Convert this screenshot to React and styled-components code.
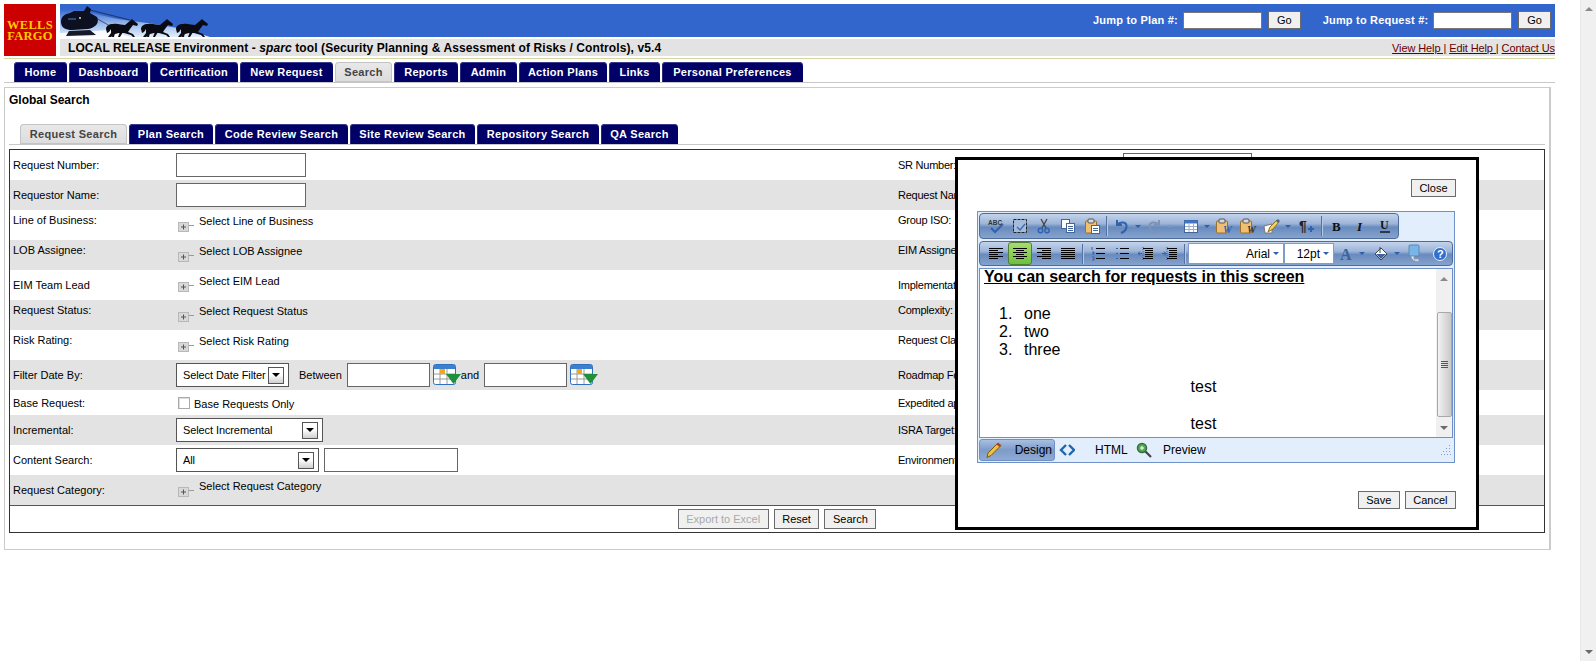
import React from 'react';
import styled, { createGlobalStyle } from 'styled-components';

const GlobalStyle = createGlobalStyle`
  html, body {
    margin: 0;
    height: 100%;
    overflow: hidden;
    background: #fff;
  }
  body, input {
    font-family: "Liberation Sans", Arial, sans-serif;
    font-size: 11px;
    color: #000;
  }
  * { box-sizing: border-box; }
`;

const Shell = styled.div`
  display: flex;
  height: 661px;
`;

const Page = styled.div`
  position: relative;
  width: 1580px;
  padding: 4px 25px 0 4px;
`;

const WindowBar = styled.div`
  width: 16px;
  height: 661px;
  padding: 7px 0;
  background: #f0f0f0;
  border-left: 1px solid #e8e8e8;
  display: flex;
  flex-direction: column;
  justify-content: space-between;
  align-items: center;
`;

const Arrow = styled.span`
  width: 0;
  height: 0;
  border-left: 4px solid transparent;
  border-right: 4px solid transparent;
  ${p => p.$up ? 'border-bottom: 4px solid #8a8a8a;' : 'border-top: 4px solid #6a6a6a;'}
`;

const Header = styled.header`
  display: flex;
  gap: 4px;
`;

const Logo = styled.div`
  width: 52px;
  height: 52px;
  background: #cc0000;
  color: #ffcc00;
  font: bold 12.5px/11px "Liberation Serif", "Times New Roman", serif;
  letter-spacing: 0.3px;
  text-align: center;
  display: flex;
  flex-direction: column;
  justify-content: center;
  padding-top: 2px;
`;

const Banner = styled.div`
  flex: 1;
  display: flex;
  flex-direction: column;
  gap: 2px;
`;

const BlueBar = styled.div`
  height: 33px;
  background: #3366cc;
  display: flex;
  justify-content: space-between;
  align-items: flex-start;
`;

const JumpForm = styled.form`
  display: flex;
  align-items: center;
  height: 18px;
  margin-top: 7px;
  padding-right: 4px;
`;

const JumpLabel = styled.label`
  color: #fff;
  font-weight: bold;
  letter-spacing: 0.2px;
  margin-left: ${p => p.$ml || 0}px;
  margin-right: 5px;
`;

const JumpInput = styled.input`
  width: 79px;
  height: 17px;
  border: 1px solid #777;
  background: #fff;
  margin-right: 6px;
`;

const Button = styled.button`
  height: 18px;
  padding: 0 7.5px;
  background: #f0f0f0;
  border: 1px solid #6b6b6b;
  font: 11px "Liberation Sans", Arial, sans-serif;
  color: ${p => p.disabled ? '#aaa' : '#000'};
`;

const GoButton = styled(Button)`
  padding: 0 8px;
`;

const GrayBar = styled.div`
  height: 17px;
  background: #e3e3e3;
  display: flex;
  justify-content: space-between;
  align-items: center;
  padding-left: 8px;
`;

const AppTitle = styled.div`
  font-size: 12px;
  font-weight: bold;
  letter-spacing: 0.1px;
`;

const HelpLinks = styled.div`
  color: #660000;
  font-size: 11px;
  letter-spacing: -0.1px;
  a { color: #660000; text-decoration: underline; }
`;

const Rule = styled.div`
  height: 1px;
  margin-top: 2px;
  background: #d6d6a4;
`;

const MainNav = styled.nav`
  display: flex;
  gap: 2px;
  height: 21px;
  margin-top: 3px;
  padding-left: 10px;
  border-bottom: 1px solid #c8c8c8;
`;

const Tab = styled.a`
  width: ${p => p.$w}px;
  height: 20px;
  display: flex;
  align-items: center;
  justify-content: center;
  font-weight: bold;
  letter-spacing: 0.3px;
  white-space: nowrap;
  border-radius: 4px 4px 0 0;
  color: ${p => p.$active ? '#444' : '#fff'};
  background: ${p => p.$active ? 'linear-gradient(#e9e9e9, #dcdcdc)' : '#000066'};
  box-shadow: ${p => p.$active
    ? 'inset 0 0 0 1px #c4c4c4'
    : 'inset 0 1px 0 #3b3b8c, inset 1px 0 0 #2a2a7c'};
`;

const Panel = styled.section`
  position: relative;
  height: 463px;
  margin-top: 4px;
  width: 1547px;
  border: 1px solid #cbcbcb;
  border-width: 1px 2px 1px 1px;
  padding: 0 4px;
`;

const PanelTitle = styled.h1`
  margin: 0;
  padding-top: 5px;
  height: 36px;
  font-size: 12px;
  line-height: 14px;
`;

const SubNav = styled(MainNav)`
  margin-top: 0;
  padding-left: 11px;
`;

const Table = styled.div`
  margin-top: 4px;
  width: 1536px;
  height: 384px;
  border: 1px solid #333;
`;

const FormRow = styled.div`
  display: grid;
  grid-template-columns: 166px 722px 225px 1fr;
  height: ${p => p.$h || 30}px;
  background: ${p => p.$shade ? '#e3e3e3' : '#fff'};
`;

const Label = styled.div`
  padding: ${p => p.$top}px 0 0 3px;
  line-height: 14px;
  white-space: nowrap;
`;

const SideLabel = styled(Label)`
  padding-left: 0;
  letter-spacing: -0.25px;
`;

const Cell = styled.div`
  display: flex;
  align-items: ${p => p.$top !== undefined ? 'flex-start' : 'center'};
  padding-top: ${p => p.$top || 0}px;
`;

const TextBox = styled.input`
  width: ${p => p.$w}px;
  height: 24px;
  border: 1px solid #666;
  background: #fff;
  margin-left: ${p => p.$ml || 0}px;
`;

const SelectBox = styled.div`
  width: ${p => p.$w}px;
  height: 24px;
  background: #fff;
  border: 1px solid #555;
  padding: 0 4px 0 6px;
  letter-spacing: -0.1px;
  display: flex;
  justify-content: space-between;
  align-items: center;
`;

const SelectButton = styled.span`
  width: 16px;
  height: 17px;
  border: 1px solid #555;
  background: linear-gradient(#fff 45%, #cfcfcf);
  display: flex;
  align-items: center;
  justify-content: center;
`;

const BlackArrow = styled.span`
  width: 0;
  height: 0;
  border-left: 4px solid transparent;
  border-right: 4px solid transparent;
  border-top: 4px solid #000;
`;

const Expander = styled.a`
  display: flex;
  gap: 4px;
  margin-left: 2px;
  line-height: 14px;
  white-space: nowrap;
`;

const Word = styled.span`
  margin: ${p => p.$mt || 0}px ${p => p.$mr || 0}px 0 ${p => p.$ml || 0}px;
`;

const CheckBox = styled.span`
  width: 12px;
  height: 12px;
  margin: 7px 4px 0 2px;
  background: #fff;
  border: 1px solid #aaa;
  box-shadow: inset 1px 1px 0 #ddd;
`;

const ActionRow = styled.div`
  height: 26px;
  display: flex;
  align-items: center;
  justify-content: center;
  gap: 5px;
  border-top: 1px solid #555;
`;

const TallButton = styled(Button)`
  height: 20px;
`;

const Dialog = styled.div`
  position: absolute;
  left: 955px;
  top: 157px;
  width: 524px;
  height: 373px;
  background: #fff;
  border: 3px solid #000;
  padding: 19px 20px 0 19px;
  display: flex;
  flex-direction: column;
`;

const DialogTop = styled.div`
  display: flex;
  justify-content: flex-end;
  gap: 5px;
  margin-top: ${p => p.$mt || 0}px;
`;

const Editor = styled.div`
  margin-top: 14px;
  width: 478px;
  height: 252px;
  background: #e3eefc;
  border: 1px solid #6f91c7;
  padding: 1px;
  display: flex;
  flex-direction: column;
`;

const Toolbar = styled.div`
  display: flex;
  align-items: center;
  width: ${p => p.$w}px;
  height: ${p => p.$h}px;
  margin-bottom: 2px;
  padding-left: 4px;
  border: 1px solid #4d6c9c;
  border-radius: 4px;
  background: linear-gradient(#c3d3ea 0%, #9db5d9 40%, #688abd 55%, #86a3cd 100%);
`;

const Tool = styled.span`
  width: 24px;
  height: 23px;
  flex: none;
  margin-left: ${p => p.$ml || 0}px;
  display: flex;
  align-items: center;
  justify-content: center;
  ${p => p.$on && `
    background: linear-gradient(#a9dc70, #6ec03c);
    border: 1px solid #4f7f34;
    border-radius: 3px;
  `}
`;

const Drop = styled.span`
  width: 8px;
  flex: none;
  display: flex;
  justify-content: center;
  &::after {
    content: '';
    border-left: 3px solid transparent;
    border-right: 3px solid transparent;
    border-top: 3px solid ${p => p.$dim ? '#7e97bd' : '#2f5fa8'};
  }
`;

const Sep = styled.span`
  width: 1px;
  height: 20px;
  flex: none;
  margin: 0 3px 0 2px;
  background: #54719f;
  box-shadow: 1px 0 0 #b5c7e2;
`;

const FontBox = styled.span`
  width: ${p => p.$w}px;
  height: 21px;
  flex: none;
  background: #fff;
  border: 1px solid #7f9dcb;
  padding-right: 3px;
  display: flex;
  align-items: center;
  justify-content: flex-end;
  font-size: 12px;
  gap: 2px;
`;

const EditArea = styled.div`
  height: 170px;
  width: 474px;
  background: #fff;
  border: 1px solid #6f91c7;
  display: flex;
  overflow: hidden;
`;

const EditText = styled.div`
  flex: 1;
  padding: 0 13px 0 4px;
  font-size: 16px;
  line-height: 18px;
`;

const EditHeading = styled.div`
  font-weight: bold;
  line-height: 16px;
  letter-spacing: -0.03px;
  text-decoration: underline;
`;

const EditList = styled.ol`
  margin: 20px 0 19px;
  padding-left: 15px;
  list-style: none;
  counter-reset: item;
  li {
    display: flex;
    counter-increment: item;
  }
  li::before {
    content: counter(item) ".";
    width: 25px;
  }
`;

const EditCenter = styled.div`
  text-align: center;
  margin-bottom: 19px;
`;

const EditScroll = styled.div`
  width: 16px;
  background: #f0f0f0;
  display: flex;
  flex-direction: column;
  align-items: center;
  padding: 8px 0 7px;
`;

const ScrollThumb = styled.div`
  width: 15px;
  height: 105px;
  margin: 31px 0 auto;
  border: 1px solid #a9a9a9;
  border-radius: 2px;
  background: linear-gradient(90deg, #f2f2f2, #c9c9c9);
  display: flex;
  align-items: center;
  justify-content: center;
`;

const Grip = styled.span`
  width: 7px;
  height: 7px;
  background: repeating-linear-gradient(#555 0 1px, transparent 1px 2px);
`;

const ModeBar = styled.div`
  flex: 1;
  display: flex;
  align-items: center;
  font-size: 12px;
  padding-right: 2px;
`;

const ModeItem = styled.span`
  display: flex;
  align-items: center;
  justify-content: space-between;
  height: 22px;
  margin-left: ${p => p.$ml || 0}px;
  width: ${p => p.$w}px;
  padding: ${p => p.$active ? '0 2px 0 6px' : '0'};
  ${p => p.$active && `
    background: linear-gradient(#a9bfe0, #7d9bc9 50%, #8fabd4);
    border: 1px solid #6f91c7;
    border-radius: 3px;
  `}
`;

const ResizeGrip = styled.svg`
  margin-left: auto;
`;

const Svg = ({ children, w = 16, h = 16 }) => (
  <svg width={w} height={h} viewBox={`0 0 ${w} ${h}`}>{children}</svg>
);

const StageArt = () => (
  <svg width="150" height="33" viewBox="0 0 150 33">
    <defs>
      <linearGradient id="sky" x1="0" y1="0" x2="0" y2="1">
        <stop offset="0" stopColor="#3366cc" />
        <stop offset="0.55" stopColor="#9dbdee" />
        <stop offset="1" stopColor="#e4eefb" />
      </linearGradient>
    </defs>
    <path d="M0 6 C20 2 38 12 58 15 C85 19 120 22 150 33 L0 33Z" fill="url(#sky)" />
    <path d="M0 29 L50 26 L70 33 L0 33Z" fill="#fff" opacity="0.85" />
    <path d="M1 18 C1 12 5 10 10 9 L14 7 L24 7 L27 2 L31 5 L30 9 L37 13 C40 19 35 24 28 25 L12 26 C6 26 1 24 1 18Z" fill="#0c1020" />
    <path d="M9 27 L30 26 L36 31 L6 32Z" fill="#161a28" />
    <path d="M30 6 L70 16 M36 14 L50 22" stroke="#0c1020" strokeWidth="0.6" fill="none" />
    <path d="M8 15 H16" stroke="#4f6fa8" strokeWidth="1.2" />
    <circle cx="20" cy="14" r="1" fill="#e8e0a0" />
    {[46, 81, 116].map(x => (
      <g key={x} transform={`translate(${x} 15)`}>
        <path
          d="M0 10 C0 7 3 5 7 5 C11 4 16 6 19 6 L25 1 L26 0 L27 1 L32 5 L31 7 L27 6 L24 10 L22 13 L27 15 L29 18 L27 18 L25 16 L18 14 L13 14 L9 15 L5 18 L2 18 L5 14 L5 10 L3 13 L1 14Z"
          fill="#0a0a12"
        />
        <path d="M17 13 L14 18 L12 18 L14 13Z M9 13 L8 18 L6 18 L7 13Z" fill="#0a0a12" />
      </g>
    ))}
  </svg>
);

const PlusIcon = () => (
  <svg width="17" height="11" viewBox="0 0 17 11" style={{ marginTop: 7 }}>
    <rect x="0.5" y="1.5" width="10" height="9" fill="#d8d8d8" stroke="#b8b8b8" />
    <path d="M3 6 H8 M5.5 3.5 V8.5" stroke="#555" />
    <path d="M11 4.5 H16" stroke="#999" />
  </svg>
);

const CalendarIcon = () => (
  <svg width="28" height="21" viewBox="0 0 28 21">
    <rect x="0.5" y="0.5" width="22" height="20" rx="2" fill="#fff" stroke="#2f6fc0" />
    <rect x="1" y="1" width="21" height="4" fill="#3b7fd0" />
    <path d="M7 5 V20 M14 5 V20 M1 10 H22 M1 15 H22" stroke="#9a9a9a" />
    <rect x="7" y="5" width="5" height="5" fill="#f2a818" />
    <path d="M13 10 H28 L20.5 20Z" fill="#1f8f3c" />
  </svg>
);

const Clip = () => (
  <g>
    <rect x="1.5" y="3" width="11" height="12" rx="1" fill="#f0c070" stroke="#9a7030" />
    <rect x="4" y="1" width="6" height="4" rx="1" fill="#d8d8d8" stroke="#555" />
  </g>
);

const icons = {
  spell: (
    <Svg>
      <text x="0" y="7" fontSize="6.5" fontWeight="bold" fontFamily="Liberation Sans" fill="#333">ABC</text>
      <path d="M3 10 L7 14 L15 6" fill="none" stroke="#2f62b0" strokeWidth="2" />
    </Svg>
  ),
  check: (
    <Svg>
      <rect x="1.5" y="1.5" width="13" height="13" fill="#a4bbdd" stroke="#222" strokeDasharray="3 1" />
      <path d="M5 9 L8 12 L13 6" fill="none" stroke="#3a69b4" strokeWidth="1.3" />
    </Svg>
  ),
  cut: (
    <Svg>
      <path d="M5 1 L10 10 M11 1 L6 10" stroke="#444" strokeWidth="1.3" />
      <circle cx="4.5" cy="12.5" r="2.2" fill="none" stroke="#2f62b0" strokeWidth="1.4" />
      <circle cx="11" cy="12.5" r="2.2" fill="none" stroke="#2f62b0" strokeWidth="1.4" />
    </Svg>
  ),
  copy: (
    <Svg>
      <rect x="1.5" y="1.5" width="8" height="9" fill="#fff" stroke="#44659a" />
      <rect x="6.5" y="5.5" width="8" height="9" fill="#fff" stroke="#44659a" />
      <path d="M8 8.5 H13 M8 10.5 H13 M8 12.5 H13" stroke="#44659a" />
    </Svg>
  ),
  paste: (
    <Svg>
      <Clip />
      <rect x="7.5" y="7.5" width="8" height="8" fill="#fff" stroke="#44659a" />
      <path d="M9 10.5 H14 M9 12.5 H14" stroke="#44659a" />
    </Svg>
  ),
  undo: (
    <Svg>
      <path d="M3 2 V7 H8" fill="none" stroke="#2f62b0" strokeWidth="2" />
      <path d="M3.5 6.5 C7 3 13 4 12.5 9 C12 12 10 14 7 15" fill="none" stroke="#2f62b0" strokeWidth="2" />
    </Svg>
  ),
  redo: (
    <Svg>
      <path d="M13 2 V7 H8" fill="none" stroke="#7e93b5" strokeWidth="2" />
      <path d="M12.5 6.5 C9 3 3 4 3.5 9 C4 12 6 14 9 15" fill="none" stroke="#7e93b5" strokeWidth="2" />
    </Svg>
  ),
  table: (
    <Svg>
      <rect x="1.5" y="2.5" width="13" height="12" fill="#fff" stroke="#44659a" />
      <rect x="1.5" y="2.5" width="13" height="3" fill="#3f76c4" />
      <path d="M6 6 V14 M10.5 6 V14 M2 8.5 H14 M2 11.5 H14" stroke="#9bb0cf" />
    </Svg>
  ),
  pasteWord: (
    <Svg w={18}>
      <Clip />
      <text x="8" y="15" fontSize="10" fontStyle="italic" fontWeight="bold" fontFamily="Liberation Serif" fill="#2f62b0">W</text>
    </Svg>
  ),
  pasteDark: (
    <Svg w={18}>
      <Clip />
      <text x="8" y="15" fontSize="10" fontStyle="italic" fontWeight="bold" fontFamily="Liberation Serif" fill="#333">W</text>
    </Svg>
  ),
  brush: (
    <Svg w={18}>
      <path d="M1 8 L9 6 V15 H2Z" fill="#fff" stroke="#777" />
      <path d="M7 9 L14 2 L16 4 L10 11 L5 14Z" fill="#f3d060" stroke="#8a6f20" />
      <path d="M13 3 L15 1 L17 3 L15 5Z" fill="#44659a" />
    </Svg>
  ),
  para: (
    <Svg>
      <text x="0" y="13" fontSize="14" fontWeight="bold" fontFamily="Liberation Sans" fill="#222">¶</text>
      <path d="M9 11 H15 M12 8 V14" stroke="#2f62b0" strokeWidth="2" />
    </Svg>
  ),
  bold: <Svg><text x="3" y="13" fontSize="13" fontWeight="bold" fontFamily="Liberation Serif" fill="#111">B</text></Svg>,
  italic: <Svg><text x="4" y="13" fontSize="13" fontStyle="italic" fontWeight="bold" fontFamily="Liberation Serif" fill="#111">I</text></Svg>,
  underline: (
    <Svg>
      <text x="3" y="11" fontSize="12" fontWeight="bold" fontFamily="Liberation Serif" fill="#111">U</text>
      <path d="M3 14 H13" stroke="#111" strokeWidth="1.4" />
    </Svg>
  ),
  left: <Svg><path d="M1 2.5 H15 M1 4.5 H10 M1 6.5 H15 M1 8.5 H10 M1 10.5 H15 M1 12.5 H10" stroke="#000" /></Svg>,
  center: <Svg><path d="M1 2.5 H15 M4 4.5 H12 M1 6.5 H15 M4 8.5 H12 M1 10.5 H15 M4 12.5 H12" stroke="#000" /></Svg>,
  right: <Svg><path d="M1 2.5 H15 M6 4.5 H15 M1 6.5 H15 M6 8.5 H15 M1 10.5 H15 M6 12.5 H15" stroke="#000" /></Svg>,
  justify: <Svg><path d="M1 2.5 H15 M1 4.5 H15 M1 6.5 H15 M1 8.5 H15 M1 10.5 H15 M1 12.5 H15" stroke="#000" /></Svg>,
  ol: (
    <Svg>
      <path d="M2 1 V4 M2 6 H4 V8 H2 M2 11 H4 V14 H2" stroke="#2f62b0" fill="none" />
      <path d="M6 2.5 H15 M6 7.5 H15 M6 12.5 H15" stroke="#000" />
    </Svg>
  ),
  ul: (
    <Svg>
      <path d="M2 2.5 H4 M2 7.5 H4 M2 12.5 H4" stroke="#2f62b0" />
      <path d="M6 2.5 H15 M6 7.5 H15 M6 12.5 H15" stroke="#000" />
    </Svg>
  ),
  outdent: (
    <Svg>
      <path d="M5 2.5 H15 M7 4.5 H15 M7 6.5 H15 M7 8.5 H15 M7 10.5 H15 M5 12.5 H15" stroke="#000" />
      <path d="M5 1 V15" stroke="#2f62b0" strokeDasharray="1 1" />
      <path d="M0 7.5 H4 M2 5.5 L0 7.5 L2 9.5" stroke="#2f62b0" fill="none" />
    </Svg>
  ),
  indent: (
    <Svg>
      <path d="M5 2.5 H15 M7 4.5 H15 M7 6.5 H15 M7 8.5 H15 M7 10.5 H15 M5 12.5 H15" stroke="#000" />
      <path d="M5 1 V15" stroke="#2f62b0" strokeDasharray="1 1" />
      <path d="M0 7.5 H4 M2 5.5 L4 7.5 L2 9.5" stroke="#2f62b0" fill="none" />
    </Svg>
  ),
  color: <Svg><text x="2" y="14" fontSize="16" fontWeight="bold" fontFamily="Liberation Serif" fill="#3a639f">A</text></Svg>,
  fill: (
    <Svg>
      <path d="M8 2 L14 8 L8 14 L2 8Z" fill="#fff" stroke="#444" />
      <path d="M3 8 H13 L8 13Z" fill="#3a639f" />
      <path d="M7 1 V7" stroke="#444" />
    </Svg>
  ),
  monitor: (
    <Svg h={20}>
      <rect x="3" y="1" width="10" height="11" rx="1" fill="#7ab5e8" stroke="#5a86b8" />
      <path d="M5 12 C5 17 11 18 13 17 V15 H8 V12Z" fill="#e8eef6" stroke="#8a9ab0" />
    </Svg>
  ),
  help: (
    <Svg>
      <circle cx="8" cy="8" r="6.5" fill="#2f6fd0" stroke="#e8f0fa" />
      <text x="5" y="12" fontSize="11" fontWeight="bold" fontFamily="Liberation Sans" fill="#fff">?</text>
    </Svg>
  ),
  pencil: (
    <Svg>
      <path d="M1 15.5 L2 11 L12 1 L15 3.5 L5 13.5Z" fill="#f0c040" stroke="#7a5a10" />
      <path d="M12 1 L15 3.5 L13.5 5 L10.5 2.5Z" fill="#c83030" />
    </Svg>
  ),
  code: (
    <Svg>
      <path d="M7 3 L2 8 L7 13 M10 3 L15 8 L10 13" fill="none" stroke="#1f66b0" strokeWidth="2.4" />
    </Svg>
  ),
  zoom: (
    <Svg>
      <circle cx="6" cy="6" r="4.5" fill="#58a858" stroke="#2f6f3a" strokeWidth="1.5" />
      <path d="M4 6 H8 M6 4 V8" stroke="#fff" />
      <path d="M9.5 9.5 L15 15" stroke="#444" strokeWidth="2.2" />
    </Svg>
  ),
};

const mainTabs = [
  ['Home', 53], ['Dashboard', 79], ['Certification', 88], ['New Request', 93], ['Search', 57],
  ['Reports', 64], ['Admin', 57], ['Action Plans', 88], ['Links', 51], ['Personal Preferences', 141],
];
const subTabs = [
  ['Request Search', 107], ['Plan Search', 84], ['Code Review Search', 133],
  ['Site Review Search', 125], ['Repository Search', 122], ['QA Search', 77],
];

const rows = [
  { label: 'Request Number:', top: 8, side: 'SR Number:', sideTop: 8, cell: <TextBox $w={130} />, sideCell: <TextBox $w={129} /> },
  { label: 'Requestor Name:', top: 8, side: 'Request Name:', sideTop: 8, cell: <TextBox $w={130} /> },
  { label: 'Line of Business:', top: 3, side: 'Group ISO:', sideTop: 3, tree: 'Select Line of Business' },
  { label: 'LOB Assignee:', top: 3, side: 'EIM Assignee:', sideTop: 3, tree: 'Select LOB Assignee' },
  { label: 'EIM Team Lead', top: 8, side: 'Implementation:', sideTop: 8, tree: 'Select EIM Lead' },
  { label: 'Request Status:', top: 3, side: 'Complexity:', sideTop: 3, tree: 'Select Request Status' },
  { label: 'Risk Rating:', top: 3, side: 'Request Class:', sideTop: 3, tree: 'Select Risk Rating' },
  {
    label: 'Filter Date By:',
    top: 8,
    side: 'Roadmap Focus:',
    sideTop: 8,
    cell: (
      <>
        <SelectBox $w={113}>Select Date Filter<SelectButton><BlackArrow /></SelectButton></SelectBox>
        <Word $ml={10} $mr={5}>Between</Word>
        <TextBox $w={83} />
        <Word $ml={3}><CalendarIcon /></Word>
        <Word $mr={5}>and</Word>
        <TextBox $w={83} />
        <Word $ml={3}><CalendarIcon /></Word>
      </>
    ),
  },
  {
    label: 'Base Request:',
    top: 6,
    side: 'Expedited approval:',
    sideTop: 6,
    h: 25,
    check: true,
  },
  {
    label: 'Incremental:',
    top: 8,
    side: 'ISRA Target:',
    sideTop: 8,
    cell: <SelectBox $w={147}>Select Incremental<SelectButton><BlackArrow /></SelectButton></SelectBox>,
  },
  {
    label: 'Content Search:',
    top: 8,
    side: 'Environment:',
    sideTop: 8,
    cell: (
      <>
        <SelectBox $w={143}>All<SelectButton><BlackArrow /></SelectButton></SelectBox>
        <TextBox $w={134} $ml={5} />
      </>
    ),
  },
  { label: 'Request Category:', top: 8, tree: 'Select Request Category' },
];

function SearchRow({ row, shade }) {
  return (
    <FormRow $shade={shade} $h={row.h}>
      <Label $top={row.top}>{row.label}</Label>
      {row.tree && (
        <Cell $top={4}>
          <Expander><PlusIcon />{row.tree}</Expander>
        </Cell>
      )}
      {row.check && (
        <Cell $top={0}>
          <CheckBox />
          <Word $mt={8}>Base Requests Only</Word>
        </Cell>
      )}
      {row.cell && <Cell>{row.cell}</Cell>}
      {row.side ? <SideLabel $top={row.sideTop}>{row.side}</SideLabel> : <span />}
      {row.sideCell ? <Cell>{row.sideCell}</Cell> : <span />}
    </FormRow>
  );
}

function RichEditor() {
  return (
    <Editor>
      <Toolbar $w={420} $h={26}>
        <Tool>{icons.spell}</Tool>
        <Tool>{icons.check}</Tool>
        <Tool>{icons.cut}</Tool>
        <Tool>{icons.copy}</Tool>
        <Tool>{icons.paste}</Tool>
        <Sep />
        <Tool>{icons.undo}</Tool>
        <Drop />
        <Tool>{icons.redo}</Tool>
        <Drop $dim />
        <Tool $ml={5}>{icons.table}</Tool>
        <Drop />
        <Tool $ml={1}>{icons.pasteWord}</Tool>
        <Tool>{icons.pasteDark}</Tool>
        <Tool>{icons.brush}</Tool>
        <Drop />
        <Tool $ml={3}>{icons.para}</Tool>
        <Sep />
        <Tool>{icons.bold}</Tool>
        <Tool>{icons.italic}</Tool>
        <Tool>{icons.underline}</Tool>
      </Toolbar>
      <Toolbar $w={474} $h={25}>
        <Tool>{icons.left}</Tool>
        <Tool $on>{icons.center}</Tool>
        <Tool>{icons.right}</Tool>
        <Tool>{icons.justify}</Tool>
        <Sep />
        <Tool>{icons.ol}</Tool>
        <Tool>{icons.ul}</Tool>
        <Tool>{icons.outdent}</Tool>
        <Tool>{icons.indent}</Tool>
        <Sep />
        <FontBox $w={96}>Arial<Drop /></FontBox>
        <FontBox $w={50}>12pt<Drop /></FontBox>
        <Tool>{icons.color}</Tool>
        <Drop />
        <Tool $ml={3}>{icons.fill}</Tool>
        <Drop />
        <Tool $ml={1}>{icons.monitor}</Tool>
        <Tool $ml={2}>{icons.help}</Tool>
      </Toolbar>
      <EditArea>
        <EditText>
          <EditHeading>You can search for requests in this screen</EditHeading>
          <EditList>
            <li>one</li>
            <li>two</li>
            <li>three</li>
          </EditList>
          <EditCenter>test</EditCenter>
          <EditCenter>test</EditCenter>
        </EditText>
        <EditScroll>
          <Arrow $up />
          <ScrollThumb><Grip /></ScrollThumb>
          <Arrow />
        </EditScroll>
      </EditArea>
      <ModeBar>
        <ModeItem $active $w={76}>{icons.pencil}<span>Design</span></ModeItem>
        <ModeItem $ml={4} $w={16}>{icons.code}</ModeItem>
        <ModeItem $ml={20} $w={33}>HTML</ModeItem>
        <ModeItem $ml={8} $w={16}>{icons.zoom}</ModeItem>
        <ModeItem $ml={11} $w={42}>Preview</ModeItem>
        <ResizeGrip width="11" height="11" viewBox="0 0 11 11">
          <path d="M9 1h1v1H9zM6 4h1v1H6zM9 4h1v1H9zM3 7h1v1H3zM6 7h1v1H6zM9 7h1v1H9zM1 10h1v1H1zM4 10h1v1H4zM7 10h1v1H7zM10 10h1v1h-1z" fill="#7f9dcb" />
        </ResizeGrip>
      </ModeBar>
    </Editor>
  );
}

export default function App() {
  return (
    <Shell>
      <GlobalStyle />
      <Page>
        <Header>
          <Logo><span>WELLS</span><span>FARGO</span></Logo>
          <Banner>
            <BlueBar>
              <StageArt />
              <JumpForm>
                <JumpLabel>Jump to Plan #:</JumpLabel>
                <JumpInput />
                <GoButton type="button">Go</GoButton>
                <JumpLabel $ml={22}>Jump to Request #:</JumpLabel>
                <JumpInput />
                <GoButton type="button">Go</GoButton>
              </JumpForm>
            </BlueBar>
            <GrayBar>
              <AppTitle>LOCAL RELEASE Environment - <i>sparc</i> tool (Security Planning &amp; Assessment of Risks / Controls), v5.4</AppTitle>
              <HelpLinks><a>View Help |</a> <a>Edit Help |</a> <a>Contact Us</a></HelpLinks>
            </GrayBar>
          </Banner>
        </Header>
        <Rule />
        <MainNav>
          {mainTabs.map(([t, w]) => <Tab key={t} $w={w} $active={t === 'Search'}>{t}</Tab>)}
        </MainNav>
        <Panel>
          <PanelTitle>Global Search</PanelTitle>
          <SubNav>
            {subTabs.map(([t, w]) => <Tab key={t} $w={w} $active={t === 'Request Search'}>{t}</Tab>)}
          </SubNav>
          <Table>
            {rows.map((row, i) => <SearchRow key={row.label} row={row} shade={i % 2 === 1} />)}
            <ActionRow>
              <TallButton disabled>Export to Excel</TallButton>
              <TallButton>Reset</TallButton>
              <TallButton>Search</TallButton>
            </ActionRow>
          </Table>
        </Panel>
        <Dialog>
          <DialogTop><Button>Close</Button></DialogTop>
          <RichEditor />
          <DialogTop $mt={28}><Button>Save</Button><Button>Cancel</Button></DialogTop>
        </Dialog>
      </Page>
      <WindowBar><Arrow $up /><Arrow /></WindowBar>
    </Shell>
  );
}
